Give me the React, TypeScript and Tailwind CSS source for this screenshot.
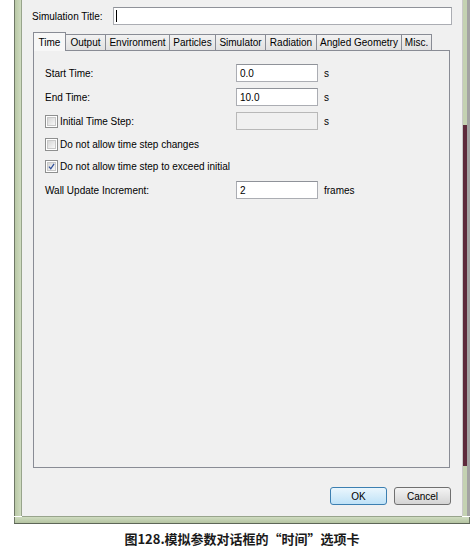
import React from "react"

const tabs = [
  { label: "Time", w: "w-[33px]" },
  { label: "Output", w: "w-[41px]" },
  { label: "Environment", w: "w-[65px]" },
  { label: "Particles", w: "w-[47px]" },
  { label: "Simulator", w: "w-[51px]" },
  { label: "Radiation", w: "w-[52px]" },
  { label: "Angled Geometry", w: "w-[86px]" },
  { label: "Misc.", w: "w-[31px]" },
]

function Checkbox({ checked }: { checked?: boolean }) {
  return (
    <div className="w-[13px] h-[13px] border border-[#8e8f8f] bg-white p-px shrink-0">
      <div className="w-full h-full bg-gradient-to-br from-[#d6d6d6] to-[#f8f8f8] border border-[#c8c8c8] flex items-center justify-center">
        {checked && (
          <svg width="9" height="9" viewBox="0 0 9 9">
            <path d="M1.2 4.6 L3.6 7.4 L7.8 1.2" fill="none" stroke="#2f4f9a" strokeWidth="1.6" />
          </svg>
        )}
      </div>
    </div>
  )
}

function Field({ value, disabled }: { value?: string; disabled?: boolean }) {
  return (
    <div
      className={
        disabled
          ? "w-[82px] h-[18px] border border-[#b8b8b8] bg-[#f0f0f0]"
          : "w-[82px] h-[18px] border border-[#abadb3] border-t-[#8f9299] bg-white pl-[3px] flex items-center"
      }
    >
      {value}
    </div>
  )
}

function InputRow({ label, value, unit, disabled, check, className }: {
  label: string; value?: string; unit: string; disabled?: boolean; check?: boolean; className?: string
}) {
  return (
    <div className={"flex items-center h-[18px] " + (className ?? "")}>
      <div className="w-[191px] flex items-center gap-[2px]">
        {check && <Checkbox />}
        <span>{label}</span>
      </div>
      <Field value={value} disabled={disabled} />
      <span className="ml-[6px]">{unit}</span>
    </div>
  )
}

function CheckRow({ label, checked, className }: { label: string; checked?: boolean; className?: string }) {
  return (
    <div className={"flex items-center h-[18px] gap-[2px] " + (className ?? "")}>
      <Checkbox checked={checked} />
      <span>{label}</span>
    </div>
  )
}

export default function App() {
  return (
    <div className="w-[474px] h-[549px] bg-white text-[10px] text-black font-['Liberation_Sans',Arial,sans-serif] overflow-hidden">
      <div className="ml-[14px] w-[456px] flex flex-col">
        <div className="flex h-[516px]">
          {/* left frame */}
          <div className="flex">
            <div className="w-px bg-[#6f7867]" />
            <div className="w-[6px] bg-gradient-to-r from-[#b9c8a6] to-[#cfdcc0]" />
            <div className="w-px bg-[#98a48c]" />
          </div>

          {/* dialog content */}
          <div className="w-[440px] bg-[#f0f0f0] flex flex-col">
            <div className="flex items-center mt-[7px] ml-[10px]">
              <span className="w-[81px]">Simulation Title:</span>
              <div className="w-[339px] h-[18px] border border-[#abadb3] border-t-[#8f9299] bg-white flex items-center pl-[2px]">
                <div className="w-px h-[12px] bg-black" />
              </div>
            </div>

            <div className="flex items-end ml-[11px] mt-[7px] h-[18px]">
              {tabs.map((t, i) =>
                i === 0 ? (
                  <div key={t.label} className={t.w + " h-[19px] -mb-px relative z-10 border border-b-0 border-[#898c95] bg-[#f7f7f7] flex items-center justify-center"}>
                    {t.label}
                  </div>
                ) : (
                  <div key={t.label} className={t.w + " h-[16px] -ml-px border border-b-0 border-[#898c95] bg-gradient-to-b from-[#f2f2f2] to-[#e1e1e1] flex items-center justify-center"}>
                    {t.label}
                  </div>
                )
              )}
            </div>

            <div className="ml-[11px] w-[417px] h-[418px] border border-[#898c95] bg-[#f0f0f0] pl-[11px] pt-[13px] flex flex-col">
              <InputRow label="Start Time:" value="0.0" unit="s" />
              <InputRow label="End Time:" value="10.0" unit="s" className="mt-[6px]" />
              <InputRow label="Initial Time Step:" unit="s" disabled check className="mt-[6px]" />
              <CheckRow label="Do not allow time step changes" className="mt-[5px]" />
              <CheckRow label="Do not allow time step to exceed initial" checked className="mt-[4px]" />
              <InputRow label="Wall Update Increment:" value="2" unit="frames" className="mt-[6px]" />
            </div>

            <div className="flex justify-end gap-[7px] mt-[19px] pr-[11px]">
              <button className="w-[57px] h-[18px] rounded-[3px] border border-[#3c7fb1] bg-gradient-to-b from-[#eaf6fd] to-[#bfe2f7] flex items-center justify-center">
                OK
              </button>
              <button className="w-[57px] h-[18px] rounded-[3px] border border-[#707070] bg-gradient-to-b from-[#f4f4f4] to-[#d4d4d4] flex items-center justify-center">
                Cancel
              </button>
            </div>
          </div>

          {/* right frame */}
          <div className="flex">
            <div className="w-px bg-[#c9c9c9]" />
            <div className="w-[4px] flex flex-col">
              <div className="h-[125px] bg-[#c4d2b2]" />
              <div className="flex-1 bg-[#5e2a3c]" />
              <div className="h-[50px] bg-[#c4d2b2]" />
            </div>
            <div className="w-[3px] bg-[#a3a3a3]" />
          </div>
        </div>

        {/* bottom frame */}
        <div className="h-[8px] flex flex-col">
          <div className="h-px bg-[#98a48c] ml-[8px] mr-[8px]" />
          <div className="h-[6px] bg-gradient-to-b from-[#cfdcc0] to-[#b5c4a2] border-l border-r border-[#6f7867]" />
          <div className="h-px bg-[#5d6657]" />
        </div>
      </div>

      <div className="ml-[14px] w-[456px] text-center pt-[6px] text-[13px] font-bold leading-[18px] text-[#1a1a1a] font-['Noto_Sans_CJK_SC','Noto_Sans',sans-serif]">
        图128.模拟参数对话框的“时间”选项卡
      </div>
    </div>
  )
}
